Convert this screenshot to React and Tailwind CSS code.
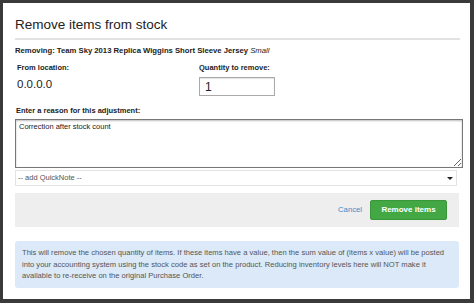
import { useState } from "react";

function App() {
    const [qty, setQty] = useState("1");
    const [reason, setReason] = useState("Correction after stock count");
    const [note, setNote] = useState("");

    return (
        <div
            className="w-[474px] h-[303px] bg-[#3a3a3a] pt-[3px] pl-[3px] pr-[4px] pb-[4px]"
            style={{ fontFamily: '"Liberation Sans", Arial, sans-serif' }}
        >
            <div className="w-full h-full bg-white pl-[12px] pr-[10px] pt-[14px] flex flex-col">
                <h3 className="text-[13.5px] leading-[16px] text-[#222] font-normal">
                    Remove items from stock
                </h3>
                <div className="mt-[5px] h-[2px] bg-[#e2e2e2]" />

                <p className="mt-[6px] text-[7.7px] leading-[10px] font-bold text-[#222]">
                    Removing: Team Sky 2013 Replica Wiggins Short Sleeve Jersey{" "}
                    <i className="font-normal">Small</i>
                </p>

                <div className="mt-[7px] grid grid-cols-[184px_1fr] px-[2px]">
                    <div className="flex flex-col">
                        <label className="text-[7.5px] leading-[10px] font-bold text-[#222]">From location:</label>
                        <span className="mt-[4px] text-[11.5px] leading-[14px] text-[#222]">0.0.0.0</span>
                    </div>
                    <div className="flex flex-col -ml-[2px]">
                        <label className="text-[7.5px] leading-[10px] font-bold text-[#222]">Quantity to remove:</label>
                        <input
                            type="text"
                            value={qty}
                            onChange={(e) => setQty(e.target.value)}
                            className="mt-[4px] w-[76px] h-[19px] border border-[#a9a9a9] pl-[5px] text-[12px] text-[#222] shadow-[inset_0_1px_1px_rgba(0,0,0,0.12)] outline-none"
                        />
                    </div>
                </div>

                <label className="mt-[10px] ml-[1px] text-[7.5px] leading-[10px] font-bold text-[#222]">
                    Enter a reason for this adjustment:
                </label>
                <textarea
                    value={reason}
                    onChange={(e) => setReason(e.target.value)}
                    className="block mt-[3px] w-[448px] h-[49px] border border-[#777] pt-[2px] pl-[3px] text-[7.5px] leading-[10px] text-[#222] shadow-[inset_0_1px_2px_rgba(0,0,0,0.25)] outline-none"
                />

                <div className="relative mt-[2px] w-[442px] h-[16px]">
                    <select
                        value={note}
                        onChange={(e) => setNote(e.target.value)}
                        className="block appearance-none w-full h-[16px] border border-[#e3e3e3] bg-white pl-[2px] text-[7.5px] text-[#555] outline-none"
                    >
                        <option value="">-- add QuickNote --</option>
                    </select>
                    <span className="pointer-events-none absolute right-[4px] top-[7px] w-0 h-0 border-l-[3px] border-r-[3px] border-t-[3px] border-l-transparent border-r-transparent border-t-[#222]" />
                </div>

                <div className="mt-[7px] w-[444px] h-[34px] bg-[#eeeeee] flex items-start justify-end pt-[7px] pr-[12px] gap-[8px]">
                    <a href="#" className="mt-[5px] text-[7.7px] leading-[10px] text-[#3a8ccb]">Cancel</a>
                    <button className="w-[77px] h-[20px] rounded-[2px] bg-[#43a743] border border-[#3a963a] text-white text-[8px] font-bold">
                        Remove items
                    </button>
                </div>

                <div className="mt-[14px] w-[444px] h-[47px] rounded-[3px] bg-[#dbe9f8] pl-[7px] pt-[6px] text-[7.6px] leading-[11.5px] text-[#555]">
                    This will remove the chosen quantity of items. If these items have a value, then the sum value of (items x value) will be posted
                    <br />
                    into your accounting system using the stock code as set on the product. Reducing inventory levels here will NOT make it
                    <br />
                    available to re-receive on the original Purchase Order.
                </div>
            </div>
        </div>
    );
}

export default App;
